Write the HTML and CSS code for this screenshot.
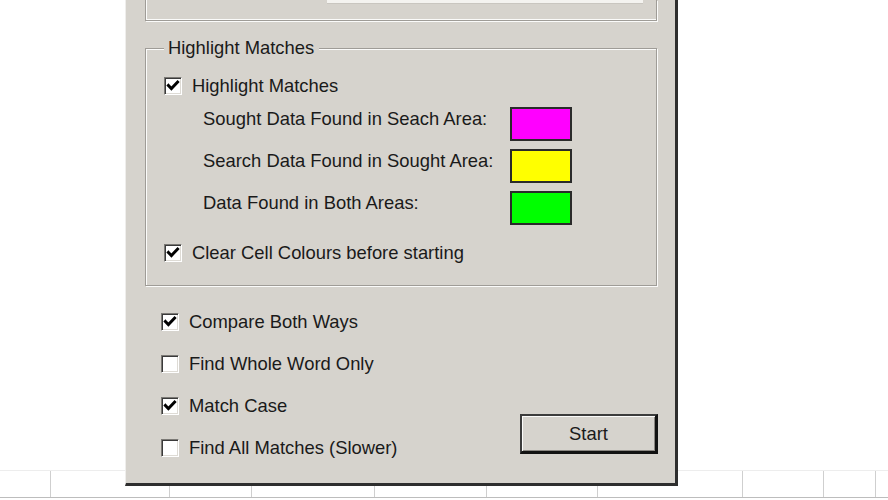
FILE: index.html
```html
<!DOCTYPE html>
<html>
<head>
<meta charset="utf-8">
<link rel="stylesheet" href="styles.css">
</head>
<body>
<div class="sheet">
  <div class="sheet-row">
    <div class="cell"></div><div class="cell"></div><div class="cell"></div><div class="cell"></div><div class="cell"></div>
    <div class="cell"></div><div class="cell"></div><div class="cell"></div><div class="cell"></div><div class="cell last"></div>
  </div>
</div>

<div class="dialog">
  <div class="topgroup"><div class="textbox"></div></div>

  <fieldset class="hl">
    <legend>Highlight Matches</legend>
    <div class="chk first">
      <span class="box"><svg viewBox="0 0 14 14"><path d="M3 6.5 L5.6 9.2 L11 3.6" /></svg></span>
      <span>Highlight Matches</span>
    </div>
    <div class="swrows">
      <div class="swrow"><span class="swlabel">Sought Data Found in Seach Area:</span><span class="sw magenta"></span></div>
      <div class="swrow"><span class="swlabel">Search Data Found in Sought Area:</span><span class="sw yellow"></span></div>
      <div class="swrow"><span class="swlabel">Data Found in Both Areas:</span><span class="sw green"></span></div>
    </div>
    <div class="chk clear">
      <span class="box"><svg viewBox="0 0 14 14"><path d="M3 6.5 L5.6 9.2 L11 3.6" /></svg></span>
      <span>Clear Cell Colours before starting</span>
    </div>
  </fieldset>

  <div class="bottom">
    <div class="opts">
      <div class="chk">
        <span class="box"><svg viewBox="0 0 14 14"><path d="M3 6.5 L5.6 9.2 L11 3.6" /></svg></span>
        <span>Compare Both Ways</span>
      </div>
      <div class="chk">
        <span class="box"></span>
        <span>Find Whole Word Only</span>
      </div>
      <div class="chk">
        <span class="box"><svg viewBox="0 0 14 14"><path d="M3 6.5 L5.6 9.2 L11 3.6" /></svg></span>
        <span>Match Case</span>
      </div>
      <div class="chk">
        <span class="box"></span>
        <span>Find All Matches (Slower)</span>
      </div>
    </div>
    <button class="start">Start</button>
  </div>
</div>
</body>
</html>
```

FILE: styles.css
```css
html, body {
  margin: 0;
  padding: 0;
  background: #fff;
  width: 888px;
  height: 500px;
  overflow: hidden;
  font-family: "Liberation Sans", Arial, sans-serif;
}

.sheet {
  padding-top: 470px;
}

.sheet-row {
  display: grid;
  grid-template-columns: 51px 119px 82px 123px 112px 111px 145px 81px 52px 1fr;
  height: 28px;
  border-top: 1px solid #ededed;
  border-bottom: 1px solid #bdbdbd;
  box-sizing: border-box;
}

.cell {
  border-right: 1px solid #cfcfcf;
}
.cell.last { border-right: none; }

.dialog {
  position: absolute;
  left: 125px;
  top: 0;
  width: 553px;
  height: 486px;
  box-sizing: border-box;
  background: #d6d3cd;
  border-left: 1px solid #efeeec;
  border-right: 3px solid #2e2e2e;
  border-bottom: 3px solid #2e2e2e;
  color: #1a1a1a;
  font-size: 18.4px;
}

.topgroup {
  margin-left: 19px;
  width: 512px;
  height: 21px;
  box-sizing: border-box;
  border: 1px solid #9f9c97;
  border-top: none;
  box-shadow: 1px 1px 0 #fbfbfa, inset 1px -1px 0 #fbfbfa;
}

.textbox {
  margin-left: 181px;
  width: 316px;
  height: 3px;
  background: #f4f3f0;
  box-shadow: 0 1px 0 #c9c6c0;
}

.hl {
  margin: 16px 0 0 19px;
  width: 512px;
  box-sizing: border-box;
  padding: 0 0 20px 0;
  border: 1px solid #9f9c97;
  box-shadow: 1px 1px 0 #fbfbfa, inset 1px 1px 0 #fbfbfa;
  min-width: 0;
}

.hl legend {
  margin-left: 18px;
  padding: 0 5px 0 4px;
  line-height: 22px;
  background: #d6d3cd;
}

.chk {
  display: flex;
  align-items: center;
  height: 24px;
  line-height: 24px;
  white-space: nowrap;
}

.box {
  width: 18px;
  height: 18px;
  box-sizing: border-box;
  background: #fff;
  border-style: solid;
  border-width: 1px;
  border-color: #7b7975 #fff #fff #7b7975;
  box-shadow: inset 1px 1px 0 #3a3a3a, inset -1px -1px 0 #dedbd5;
  margin-right: 10px;
  flex: none;
  display: flex;
  align-items: center;
  justify-content: center;
}

.box svg {
  width: 16px;
  height: 16px;
}

.box path {
  fill: none;
  stroke: #000;
  stroke-width: 2.6;
  stroke-linecap: square;
}

.hl .chk {
  margin-left: 18px;
}

.hl .chk.first {
  margin-top: 15px;
}

.swrows {
  margin-top: 9px;
  margin-left: 57px;
  display: flex;
  flex-direction: column;
  gap: 8px;
}

.swrow {
  display: flex;
  align-items: flex-start;
  height: 34px;
}

.swlabel {
  width: 307px;
  line-height: 24px;
  white-space: nowrap;
}

.sw {
  width: 62px;
  height: 34px;
  box-sizing: border-box;
  border: 2px solid #2a2a2a;
}
.sw.magenta { background: #ff00ff; }
.sw.yellow { background: #ffff00; }
.sw.green { background: #00ff00; }

.hl .chk.clear {
  margin-top: 16px;
}

.bottom {
  display: flex;
  justify-content: space-between;
  margin: 24px 17px 0 35px;
}

.opts {
  display: flex;
  flex-direction: column;
  gap: 18px;
}

.start {
  align-self: flex-end;
  margin-bottom: 6px;
  width: 138px;
  height: 40px;
  box-sizing: border-box;
  background: #d6d3cd;
  font-family: "Liberation Sans", Arial, sans-serif;
  font-size: 18.4px;
  color: #1a1a1a;
  border-style: solid;
  border-width: 2px 3px 3px 2px;
  border-color: #3c3c3c #121212 #121212 #3c3c3c;
  box-shadow: inset 1px 1px 0 #fbfbfa, inset -1px -1px 0 #8a8782;
  padding: 0;
}
```
